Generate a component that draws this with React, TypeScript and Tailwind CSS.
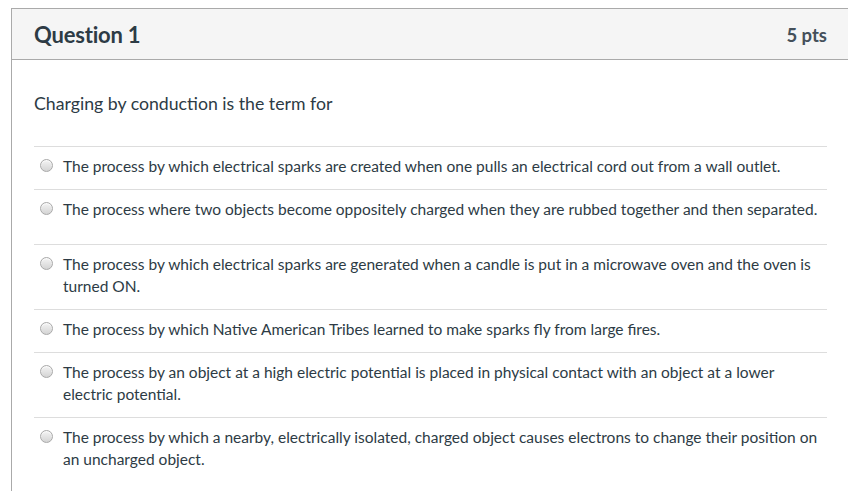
const answers = [
  { text: 'The process by which electrical sparks are created when one pulls an electrical cord out from a wall outlet.', extra: false },
  { text: 'The process where two objects become oppositely charged when they are rubbed together and then separated.', extra: true },
  { text: 'The process by which electrical sparks are generated when a candle is put in a microwave oven and the oven is turned ON.', extra: false },
  { text: 'The process by which Native American Tribes learned to make sparks fly from large fires.', extra: false },
  { text: 'The process by an object at a high electric potential is placed in physical contact with an object at a lower electric potential.', extra: false },
  { text: 'The process by which a nearby, electrically isolated, charged object causes electrons to change their position on an uncharged object.', extra: false },
]

function Radio() {
  return (
    <span className="mt-[4px] w-[13px] h-[13px] shrink-0 rounded-full border border-[#a9a9a9] bg-gradient-to-b from-[#f4f4f4] to-[#d4d4d4] shadow-[inset_0_1px_1px_rgba(255,255,255,0.8)]" />
  )
}

export default function App() {
  return (
    <div className="w-screen h-screen overflow-hidden bg-white font-['Lato','Liberation_Sans',sans-serif] text-[#2d3b45]">
      <div className="ml-[11px] mt-[8px] w-[839px] border border-[#aaaaaa]">
        <div className="h-[51px] bg-[#f5f5f5] border-b border-[#aaaaaa] px-[22px] flex items-center justify-between">
          <h2 className="text-[22px] font-bold tracking-[-0.2px]">Question 1</h2>
          <span className="mt-[3px] text-[18.5px] font-bold text-[#44505a]">5 pts</span>
        </div>
        <div className="px-[22px] pt-[31px] pb-[30px]">
          <p className="text-[17.7px] leading-[26px]">Charging by conduction is the term for</p>
          <div className="mt-[29px]">
            {answers.map((a, i) => (
              <div
                key={i}
                className={`border-t border-[#dddddd] pl-[6px] pt-[8px] flex items-start gap-[10px] ${a.extra ? 'pb-[24px]' : 'pb-[12px]'}`}
              >
                <Radio />
                <p className="text-[15.5px] leading-[22px]">{a.text}</p>
              </div>
            ))}
          </div>
        </div>
      </div>
    </div>
  )
}
